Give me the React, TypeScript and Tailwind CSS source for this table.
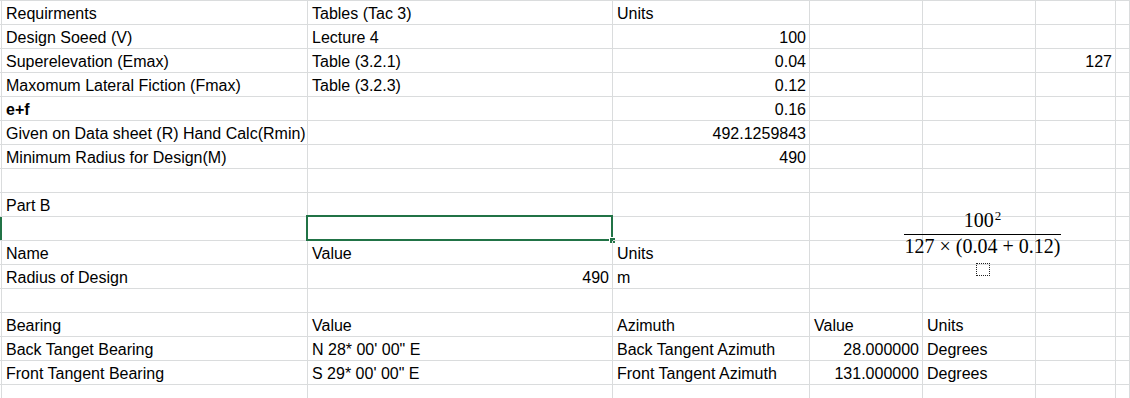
import React from "react";

type Cell = { t: string; r?: boolean; b?: boolean } | null;

const COLS = [
  "w-[306px]",
  "w-[305px]",
  "w-[197px]",
  "w-[113px]",
  "w-[113px]",
  "w-[80px]",
  "flex-1",
];

const L = (t: string): Cell => ({ t });
const R = (t: string): Cell => ({ t, r: true });

const ROWS: Cell[][] = [
  [L("Requirments"), L("Tables (Tac 3)"), L("Units")],
  [L("Design Soeed (V)"), L("Lecture 4"), R("100")],
  [L("Superelevation (Emax)"), L("Table (3.2.1)"), R("0.04"), null, null, R("127")],
  [L("Maxomum Lateral Fiction (Fmax)"), L("Table (3.2.3)"), R("0.12")],
  [{ t: "e+f", b: true }, null, R("0.16")],
  [L("Given on Data sheet (R) Hand Calc(Rmin)"), null, R("492.1259843")],
  [L("Minimum Radius for Design(M)"), null, R("490")],
  [],
  [L("Part B")],
  [],
  [L("Name"), L("Value"), L("Units")],
  [L("Radius of Design"), R("490"), L("m")],
  [],
  [L("Bearing"), L("Value"), L("Azimuth"), L("Value"), L("Units")],
  [
    L("Back Tanget Bearing"),
    L("N 28* 00' 00\" E"),
    L("Back Tangent Azimuth"),
    R("28.000000"),
    L("Degrees"),
  ],
  [
    L("Front Tangent Bearing"),
    L("S 29* 00' 00\" E"),
    L("Front Tangent Azimuth"),
    R("131.000000"),
    L("Degrees"),
  ],
  [],
];

function Equation() {
  return (
    <div className="absolute left-[904px] top-[209px] w-[157px] flex flex-col items-center font-['Liberation_Serif','Times_New_Roman',serif] text-[20px] text-black">
      <div className="h-[22px] leading-[22px] flex items-start">
        <span>100</span>
        <span className="text-[13px] leading-[13px] mt-[0px] ml-[1px]">2</span>
      </div>
      <div className="mt-[3px] h-[1px] w-full bg-black" />
      <div className="h-[22px] leading-[22px] whitespace-nowrap flex">
        <span>127</span>
        <span className="mx-[5px]">×</span>
        <span>(0.04</span>
        <span className="mx-[5px]">+</span>
        <span>0.12)</span>
      </div>
      <div className="mt-[6px] w-[14px] h-[13px] border border-dotted border-[#222]" />
    </div>
  );
}

export default function App() {
  return (
    <div className="relative w-[1130px] h-[398px] overflow-hidden bg-white text-black font-['Liberation_Sans','Arial',sans-serif] text-[16px]">
      <div className="border-t border-[#dadcdd]">
        {ROWS.map((row, ri) => {
          const selectedRow = ri === 9;
          return (
            <div key={ri} className="flex h-[24px]">
              <div
                className={
                  selectedRow
                    ? "w-[2px] shrink-0 bg-[#217346] border-b border-[#dadcdd]"
                    : "w-[2px] shrink-0 border-r border-b border-[#dadcdd]"
                }
              />
              {COLS.map((w, ci) => {
                const c = row[ci];
                const sel = selectedRow && ci === 1;
                return (
                  <div
                    key={ci}
                    className={`${w} relative shrink-0 h-[24px] border-r border-b border-[#dadcdd] pt-[1px] leading-[23px] whitespace-nowrap ${
                      c && c.r ? "text-right pr-[3px]" : "pl-[4px]"
                    } ${c && c.b ? "font-bold" : ""}`}
                  >
                    {c ? c.t : ""}
                    {sel && (
                      <>
                        <div className="absolute left-[-2px] top-[-2px] w-[307px] h-[26px] border-2 border-[#217346]" />
                        <div className="absolute left-[301px] top-[20px] w-[7px] h-[7px] bg-[#217346] border border-white" />
                      </>
                    )}
                  </div>
                );
              })}
            </div>
          );
        })}
      </div>
      <Equation />
    </div>
  );
}
